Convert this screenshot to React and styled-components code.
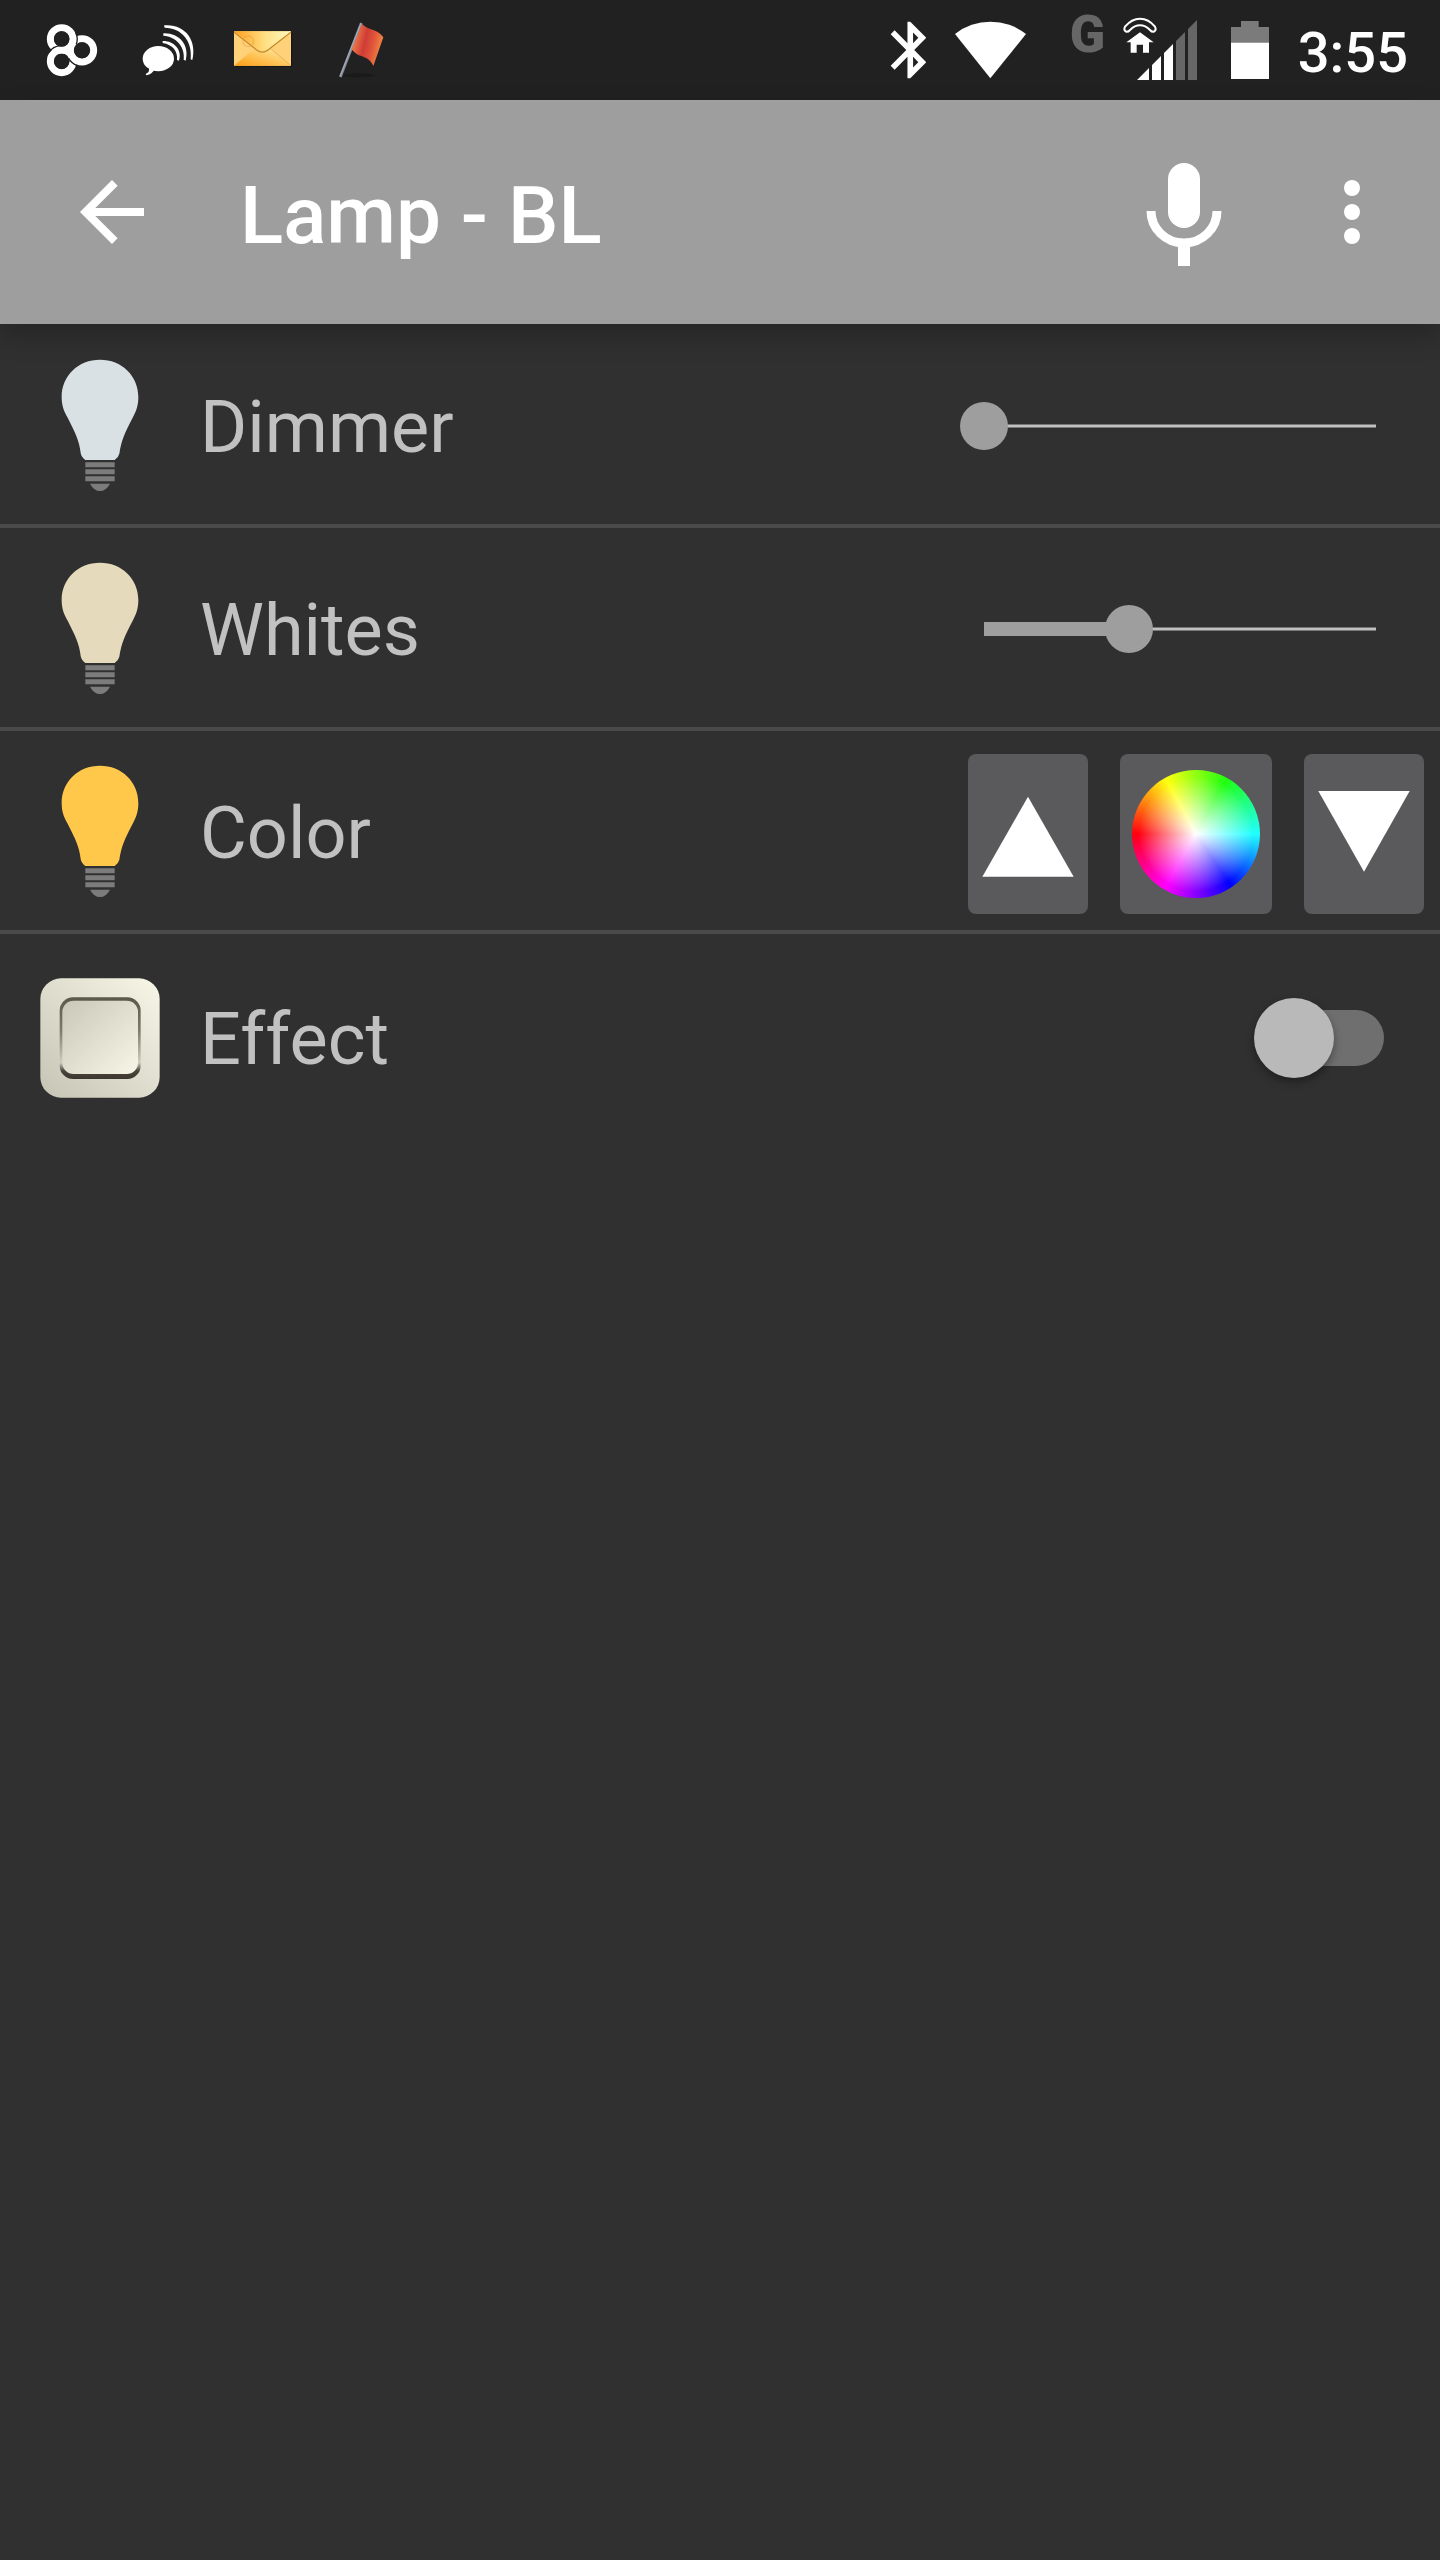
import React, { useState } from 'react'
import styled, { createGlobalStyle } from 'styled-components'

const GlobalStyle = createGlobalStyle`
  * {
    box-sizing: border-box;
  }
  body {
    margin: 0;
    background-color: #303030;
    font-family: Roboto, 'Liberation Sans', sans-serif;
  }
`

const Screen = styled.div`
  display: flex;
  flex-direction: column;
  min-height: 100vh;
  background-color: #303030;
  color: #c1c1c1;
`

const StatusBar = styled.div`
  display: flex;
  align-items: center;
  justify-content: space-between;
  height: 100px;
  padding: 0 32px 0 40px;
  background-color: #212121;
  color: #fff;
`

const Notifications = styled.div`
  display: flex;
  gap: 32px;
`

const SystemIcons = styled.div`
  display: flex;
  align-items: center;
  height: 100px;
`

const Icon = styled.svg`
  display: block;
  flex: none;
  width: ${({ $w }) => $w}px;
  height: ${({ $h }) => $h}px;
`

const Radios = styled.div`
  display: flex;
  align-items: center;
  gap: 28px;
`

const NetworkType = styled.span`
  align-self: flex-start;
  width: 36px;
  margin: 0 16px 0 44px;
  color: #666;
  font-size: 52px;
  font-weight: 900;
  line-height: 70px;
`

const Battery = styled(Icon)`
  margin: 0 28px 0 32px;
`

const Clock = styled.time`
  padding-top: 6px;
  font-size: 56px;
  font-weight: 500;
`

const AppBar = styled.header`
  position: relative;
  z-index: 1;
  display: flex;
  align-items: center;
  height: 224px;
  padding: 0 40px 0 64px;
  background-color: #9e9e9e;
  box-shadow: 0 12px 24px rgba(0, 0, 0, 0.22);
  color: #fff;
`

const IconButton = styled.button`
  display: flex;
  align-items: center;
  justify-content: center;
  width: 96px;
  height: 96px;
  padding: 0;
  border: none;
  background: none;
  color: inherit;
  cursor: pointer;
`

const Title = styled.h1`
  flex: 1;
  margin: 0;
  padding: 8px 0 0 80px;
  font-size: 80px;
  font-weight: 500;
`

const Actions = styled.div`
  display: flex;
  align-items: center;
  gap: 72px;
`

const List = styled.ul`
  margin: 0;
  padding: 1px 0 0;
  list-style: none;
`

const Row = styled.li`
  display: flex;
  align-items: center;
  height: 203px;
  padding: 2px 0 0 40px;
  border-bottom: 4px solid #4a4a4a;

  &:last-child {
    height: 205px;
    border-bottom: none;
  }
`

const Label = styled.label`
  flex: 1;
  padding: 4px 0 0 40px;
  font-size: 72px;
`

const Slider = styled.input`
  appearance: none;
  width: 440px;
  height: 48px;
  margin: 0 40px 0 0;
  background:
    linear-gradient(#9e9e9e, #9e9e9e) 24px center /
      calc((100% - 48px) * ${({ value }) => value / 100}) 14px no-repeat,
    linear-gradient(#777 1px, #c1c1c1 1px, #c1c1c1 3px, #777 3px) center /
      calc(100% - 48px) 4px no-repeat;
  cursor: pointer;

  &::-webkit-slider-thumb {
    appearance: none;
    width: 48px;
    height: 48px;
    border-radius: 50%;
    background-color: #9e9e9e;
  }
`

const ColorControls = styled.div`
  display: flex;
  align-self: flex-end;
  gap: 32px;
  padding: 0 16px 16px 0;
`

const ColorButton = styled.button`
  display: flex;
  align-items: center;
  justify-content: center;
  width: ${({ $wide }) => ($wide ? 152 : 120)}px;
  height: 160px;
  padding: 0;
  border: none;
  border-radius: 8px;
  background-color: #5a5a5c;
  cursor: pointer;
`

const Wheel = styled.span`
  width: 128px;
  height: 128px;
  border-radius: 50%;
  background:
    radial-gradient(closest-side, #fff, rgba(255, 255, 255, 0) 90%),
    conic-gradient(
      from 270deg,
      #ff0010,
      #ff1 61deg,
      #20ff10 119deg,
      #20ffff 180deg,
      #00f 236deg,
      #f0f 300deg,
      #ff0010
    );
`

const Toggle = styled.input`
  appearance: none;
  position: relative;
  width: 120px;
  height: 56px;
  margin: 0 56px 0 0;
  border-radius: 28px;
  background-color: #6f6f6f;
  cursor: pointer;

  &::before {
    content: '';
    position: absolute;
    top: -12px;
    left: -10px;
    width: 80px;
    height: 80px;
    border-radius: 50%;
    background-color: #b9b9b9;
    box-shadow: 0 4px 8px rgba(0, 0, 0, 0.35);
  }

  &:checked::before {
    left: 50px;
  }
`

// three linked rings, the dark arcs are the gaps where one passes over another
const RingsIcon = () => (
  <Icon $w={64} $h={64} viewBox="30 54 192 192" fill="none">
    <g stroke="#fff" strokeWidth="21">
      <circle cx="95" cy="117" r="34" />
      <circle cx="95" cy="184" r="34" />
      <circle cx="156" cy="151" r="35" />
    </g>
    <circle cx="95" cy="117" r="23" fill="#212121" />
    <circle cx="95" cy="184" r="23" fill="#212121" />
    <circle cx="156" cy="151" r="24" fill="#212121" />
    <g stroke="#212121" strokeWidth="4">
      <path d="M137 97A47 47 0 0 1 139 133" />
      <path d="M56 158A47 47 0 0 1 92 137" />
      <path d="M116 175A47 47 0 0 0 140 196" />
    </g>
  </Icon>
)

const SpeechIcon = () => (
  <Icon $w={64} $h={64} viewBox="318 54 192 192" fill="#fff">
    <ellipse cx="385" cy="176" rx="47" ry="38" />
    <path d="M356 200C360 214 354 218 347 222L349 226C362 224 368 218 374 208Z" />
    <path d="M402 76C462 70 502 118 487 180L482 178C488 124 456 84 404 83Z" />
    <path d="M400 100C446 98 480 134 467 182L461 179C466 142 440 110 400 107Z" />
    <path d="M398 123C430 122 458 148 447 182L441 180C444 154 428 134 398 129Z" />
  </Icon>
)

const MailIcon = () => (
  <Icon $w={64} $h={64} viewBox="606 54 192 192">
    <defs>
      <linearGradient id="mail-body" x1="0" y1="1" x2="1" y2="0">
        <stop offset="0" stopColor="#ff9d12" />
        <stop offset="1" stopColor="#ffefa8" />
      </linearGradient>
      <linearGradient id="mail-flap" x1="0" y1="0" x2="1" y2="0">
        <stop offset="0" stopColor="#ff9f1c" />
        <stop offset="0.55" stopColor="#ffe084" />
        <stop offset="1" stopColor="#fff9c0" />
      </linearGradient>
    </defs>
    <path d="M616 98h171v103h-171z" fill="#111" opacity="0.6" />
    <path d="M612 94h171v103h-171z" fill="#ffd27a" />
    <path d="M612 197L672 146Q697 168 722 146L783 197Z" fill="url(#mail-body)" />
    <path d="M722 146L783 197" stroke="#d9a548" strokeWidth="2" />
    <path
      d="M612 96L680 150Q697 163 714 150L783 96"
      fill="none"
      stroke="#c38a2c"
      strokeWidth="4"
    />
    <path d="M612 94H783L714 146Q697 158 680 146Z" fill="url(#mail-flap)" />
    <circle cx="655" cy="124" r="16" fill="none" stroke="#e5a040" strokeWidth="4" opacity="0.5" />
  </Icon>
)

const FlagIcon = () => (
  <Icon $w={64} $h={64} viewBox="894 54 192 192">
    <defs>
      <linearGradient id="flag" x1="0" y1="0" x2="1" y2="0.3">
        <stop offset="0.1" stopColor="#f4864a" />
        <stop offset="0.5" stopColor="#cf3c36" />
        <stop offset="0.75" stopColor="#e0563a" />
        <stop offset="1" stopColor="#f08444" />
      </linearGradient>
    </defs>
    <ellipse cx="985" cy="226" rx="48" ry="6" fill="#1a1a1a" />
    <path d="M994 69L931 231" stroke="#858c9c" strokeWidth="8" />
    <path d="M993 70L930 229" stroke="#b9bfca" strokeWidth="2" />
    <path
      d="M996 72C1014 92 1040 84 1060 112L1030 198C1014 162 988 178 965 148Z"
      fill="url(#flag)"
    />
  </Icon>
)

const BluetoothIcon = () => (
  <Icon $w={36} $h={60} viewBox="60 60 108 180" fill="#fff">
    <path
      transform="translate(20 48) scale(8.4 8.5)"
      d="M17.71 7.71L12 2h-1v7.59L6.41 5 5 6.41 10.59 12 5 17.59 6.41 19 11 14.41V22h1l5.71-5.71-4.3-4.29 4.3-4.29zM13 5.83l1.88 1.88L13 9.59V5.83zm1.88 10.46L13 18.17v-3.76l1.88 1.88z"
    />
  </Icon>
)

const WifiIcon = () => (
  <Icon $w={72} $h={60} viewBox="252 60 216 180" fill="#fff">
    <path d="M361 235L255 102A172 172 0 0 1 468 102Z" />
  </Icon>
)

const SignalIcon = () => (
  <Icon $w={76} $h={66} viewBox="756 51 228 198" fill="#fff">
    <path
      d="M768 95Q760 90 765 80Q785 56 810 56Q836 56 855 80Q860 90 852 95Q846 97 840 90Q826 76 810 76Q794 76 780 90Q774 97 768 95Z"
      fill="none"
      stroke="#fff"
      strokeWidth="6"
    />
    <path d="M810 97L851 127H837V158H819V134H800V158H782V127H769Z" />
    <path d="M801 240L837 204V240ZM846 240V195L873 168V240ZM882 240V159L909 132V240Z" />
    <path d="M918 240V123L945 96V240ZM954 240V87L981 60V240Z" fill="#666" />
  </Icon>
)

const BatteryIcon = () => (
  <Battery $w={40} $h={60} viewBox="330 60 120 180">
    <path d="M363 63h53v18h31v48H333V81h30z" fill="#7b7b7b" />
    <path d="M333 128h114v109H333z" fill="#fff" />
  </Battery>
)

const BackIcon = () => (
  <Icon $w={96} $h={96} viewBox="0 0 24 24" fill="currentColor">
    <path d="M20 11H7.83l5.59-5.59L12 4l-8 8 8 8 1.41-1.41L7.83 13H20v-2z" />
  </Icon>
)

const MicIcon = () => (
  <Icon $w={76} $h={108} viewBox="0 -5 76 108" fill="currentColor">
    <rect x="22" y="0" width="32" height="65" rx="16" />
    <path
      d="M5 48a33 32 0 0 0 66 0"
      fill="none"
      stroke="currentColor"
      strokeWidth="9"
    />
    <rect x="32" y="82" width="12" height="21" />
  </Icon>
)

const MoreIcon = () => (
  <Icon $w={96} $h={96} viewBox="0 0 24 24" fill="currentColor">
    <circle cx="12" cy="6" r="2" />
    <circle cx="12" cy="12" r="2" />
    <circle cx="12" cy="18" r="2" />
  </Icon>
)

const Bulb = ({ color }) => (
  <Icon $w={120} $h={140} viewBox="120 47 360 420">
    <path
      fill={color}
      d="M300 58C365 58 415 106 415 170C415 195 409 212 398 232C375 276 364 300 358 340Q356 350 344 359H256Q244 350 242 338C238 300 225 276 203 232C191 212 185 195 185 170C185 106 235 58 300 58Z"
    />
    <path
      fill="#7c7c7c"
      d="M256 366h88v15h-88zM256 387h88v15h-88zM256 408h88v15h-88zM270 430H330Q318 452 300 452Q282 452 270 430Z"
    />
  </Icon>
)

const WallSwitch = () => (
  <Icon $w={120} $h={120} viewBox="120 170 360 360">
    <defs>
      <linearGradient id="plate" x1="0" y1="1" x2="1" y2="0">
        <stop offset="0" stopColor="#c6c4b5" />
        <stop offset="1" stopColor="#f8f6e6" />
      </linearGradient>
      <linearGradient id="slot" x1="0" y1="0" x2="0" y2="1">
        <stop offset="0" stopColor="#5c5847" />
        <stop offset="0.4" stopColor="#7d7a6c" />
        <stop offset="0.8" stopColor="#cfcdbe" />
        <stop offset="0.9" stopColor="#4a453c" />
        <stop offset="1" stopColor="#3c3630" />
      </linearGradient>
      <linearGradient id="key" x1="0" y1="0" x2="1" y2="1">
        <stop offset="0" stopColor="#c9c7b8" />
        <stop offset="1" stopColor="#f8f6e6" />
      </linearGradient>
    </defs>
    <rect x="121" y="171" width="358" height="358" rx="62" fill="url(#plate)" />
    <rect x="179" y="228" width="243" height="245" rx="40" fill="url(#slot)" />
    <rect x="187" y="238" width="227" height="220" rx="34" fill="url(#key)" />
  </Icon>
)

const App = () => {
  const [dimmer, setDimmer] = useState(0)
  const [whites, setWhites] = useState(37)
  const [effect, setEffect] = useState(false)

  return (
    <>
      <GlobalStyle />
      <Screen>
        <StatusBar>
          <Notifications>
            <RingsIcon />
            <SpeechIcon />
            <MailIcon />
            <FlagIcon />
          </Notifications>
          <SystemIcons>
            <Radios>
              <BluetoothIcon />
              <WifiIcon />
            </Radios>
            <NetworkType>G</NetworkType>
            <SignalIcon />
            <BatteryIcon />
            <Clock>3:55</Clock>
          </SystemIcons>
        </StatusBar>
        <AppBar>
          <IconButton aria-label="Back">
            <BackIcon />
          </IconButton>
          <Title>Lamp - BL</Title>
          <Actions>
            <IconButton aria-label="Voice command">
              <MicIcon />
            </IconButton>
            <IconButton aria-label="More options">
              <MoreIcon />
            </IconButton>
          </Actions>
        </AppBar>
        <List>
          <Row>
            <Bulb color="#d9e1e4" />
            <Label htmlFor="dimmer">Dimmer</Label>
            <Slider
              id="dimmer"
              type="range"
              value={dimmer}
              onChange={e => setDimmer(Number(e.target.value))}
            />
          </Row>
          <Row>
            <Bulb color="#e5dabb" />
            <Label htmlFor="whites">Whites</Label>
            <Slider
              id="whites"
              type="range"
              value={whites}
              onChange={e => setWhites(Number(e.target.value))}
            />
          </Row>
          <Row>
            <Bulb color="#ffc84b" />
            <Label as="span" id="color">
              Color
            </Label>
            <ColorControls role="group" aria-labelledby="color">
              <ColorButton aria-label="Brighter">
                <Icon $w={120} $h={160} viewBox="84 72 360 480" fill="#fff">
                  <path d="M264 200L401 440H127Z" />
                </Icon>
              </ColorButton>
              <ColorButton $wide aria-label="Pick a color">
                <Wheel />
              </ColorButton>
              <ColorButton aria-label="Darker">
                <Icon $w={120} $h={160} viewBox="1092 72 360 480" fill="#fff">
                  <path d="M1135 183H1409L1272 425Z" />
                </Icon>
              </ColorButton>
            </ColorControls>
          </Row>
          <Row>
            <WallSwitch />
            <Label htmlFor="effect">Effect</Label>
            <Toggle
              id="effect"
              type="checkbox"
              role="switch"
              checked={effect}
              onChange={e => setEffect(e.target.checked)}
            />
          </Row>
        </List>
      </Screen>
    </>
  )
}

export default App
